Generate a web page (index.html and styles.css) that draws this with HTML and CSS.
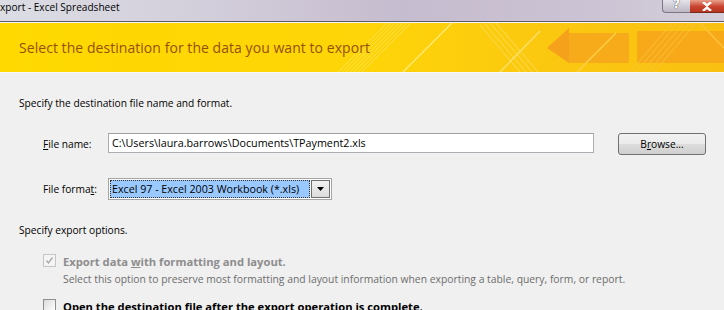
FILE: index.html
```html
<!DOCTYPE html>
<html>
<head>
<meta charset="utf-8">
<link rel="stylesheet" href="styles.css">
</head>
<body>
<div class="window">
  <div class="titlebar">
    <span class="title">xport - Excel Spreadsheet</span>
    <div class="caption-btns">
      <span class="cap help">?</span>
      <span class="cap close">
        <svg width="12" height="9" viewBox="0 0 12 9"><path d="M2 0 L6 3.5 L10 0 M2 9 L6 5.5 L10 9" stroke="#fff" stroke-width="2.4" fill="none"/></svg>
      </span>
    </div>
  </div>
  <div class="banner">
    <svg class="banner-art" width="724" height="49" viewBox="0 0 724 49">
      <defs>
        <linearGradient id="bg" x1="0" x2="1" y1="0" y2="0">
          <stop offset="0" stop-color="#ffd900"/>
          <stop offset="0.5" stop-color="#fed508"/>
          <stop offset="0.75" stop-color="#fbc810"/>
          <stop offset="1" stop-color="#f9c012"/>
        </linearGradient>
      </defs>
      <rect width="724" height="49" fill="url(#bg)"/>
      <g stroke="#ffe45a" stroke-width="1" opacity="0.8">
        <line x1="338" y1="49" x2="387" y2="0"/>
        <line x1="342" y1="49" x2="391" y2="0"/>
        <line x1="346" y1="49" x2="395" y2="0"/>
        <line x1="350" y1="49" x2="399" y2="0"/>
        <line x1="354" y1="49" x2="403" y2="0"/>
        <line x1="358" y1="49" x2="407" y2="0"/>
        <line x1="362" y1="49" x2="411" y2="0"/>
      </g>
      <line x1="403" y1="49" x2="452" y2="0" stroke="#ffe870" stroke-width="1.5"/>
      <g stroke="#fde06a" stroke-width="1" opacity="0.8">
        <line x1="480" y1="2" x2="520" y2="49"/>
        <line x1="484" y1="0" x2="526" y2="49"/>
        <line x1="490" y1="0" x2="532" y2="49"/>
        <line x1="496" y1="0" x2="538" y2="49"/>
      </g>
      <line x1="500" y1="49" x2="540" y2="8" stroke="#fde06a" stroke-width="1.5"/>
      <polygon points="547,25 569,5 569,40" fill="#f6a11c"/>
      <rect x="569" y="10" width="60" height="30" fill="#f7ab1a"/>
      <line x1="577" y1="49" x2="616" y2="10" stroke="#fbd046" stroke-width="1.5"/>
      <rect x="637" y="8" width="87" height="32" fill="#f7a91a"/>
      <g stroke="#fbc53a" stroke-width="1" opacity="0.9">
        <line x1="630" y1="49" x2="672" y2="0"/>
        <line x1="636" y1="49" x2="678" y2="0"/>
        <line x1="642" y1="49" x2="684" y2="0"/>
        <line x1="648" y1="49" x2="690" y2="0"/>
        <line x1="654" y1="49" x2="696" y2="0"/>
      </g>
      <line x1="700" y1="0" x2="724" y2="25" stroke="#fbc53a" stroke-width="1.5"/>
    </svg>
    <h1 class="banner-text">Select the destination for the data you want to export</h1>
  </div>
  <div class="content">
    <p class="section">Specify the destination file name and format.</p>
    <div class="row row-name">
      <label class="lbl"><u>F</u>ile name:</label>
      <div class="input">C:\Users\laura.barrows\Documents\TPayment2.xls</div>
      <div class="spacer"></div>
      <button class="btn">B<u>r</u>owse...</button>
    </div>
    <div class="row row-format">
      <label class="lbl">File forma<u>t</u>:</label>
      <div class="select">
        <span class="sel-value">Excel 97 - Excel 2003 Workbook (*.xls)</span>
        <span class="sel-arrow"><svg width="7" height="4" viewBox="0 0 7 4"><path d="M0 0 H7 L3.5 4 Z" fill="#000"/></svg></span>
      </div>
    </div>
    <p class="section section2">Specify export options.</p>
    <div class="opt">
      <span class="chk disabled"><svg width="11" height="11" viewBox="0 0 11 11"><path d="M2.5 5.5 L4.5 8 L8.5 2.5" stroke="#a9a9a9" stroke-width="1.3" fill="none"/></svg></span>
      <div class="opt-text">
        <div class="opt-title grey">Export data <u>w</u>ith formatting and layout.</div>
        <div class="opt-desc">Select this option to preserve most formatting and layout information when exporting a table, query, form, or report.</div>
      </div>
    </div>
    <div class="opt opt2">
      <span class="chk"></span>
      <div class="opt-text">
        <div class="opt-title">Open the destination file after the export operation is complete.</div>
      </div>
    </div>
  </div>
</div>
</body>
</html>
```

FILE: styles.css
```css
* { box-sizing: border-box; }
html, body { margin: 0; padding: 0; }
body {
  width: 724px;
  height: 310px;
  overflow: hidden;
  background: #f0f0f0;
  font-family: "Open Sans", "Noto Sans", sans-serif;
  font-size: 10.2px;
  color: #000;
}
.window { width: 724px; }
.titlebar {
  height: 22px;
  display: flex;
  align-items: flex-start;
  justify-content: space-between;
  background: linear-gradient(90deg, #dcdde4 0%, #d2cdda 30%, #c6bccf 55%, #cbc2d3 80%, #d4cfda 100%);
  border-bottom: 1px solid #5e5a66;
}
.title {
  font-size: 10.1px;
  line-height: 14px;
  padding-top: 0;
  color: #000;
}
.caption-btns { display: flex; }
.cap {
  height: 13px;
  display: flex;
  align-items: flex-end;
  justify-content: center;
  overflow: hidden;
}
.help {
  width: 28px;
  border: 1px solid #7c7786;
  border-top: none;
  border-right: none;
  border-radius: 0 0 0 4px;
  background: linear-gradient(#e6e3ea, #bdb7c4);
  color: #fff;
  font-weight: bold;
  font-family: "DejaVu Sans", sans-serif;
  font-size: 12px;
  text-shadow: 0 0 1px #555, 0 0 1px #555;
  line-height: 15px;
}
.close {
  width: 34px;
  align-items: center;
  background: linear-gradient(#e9a08c, #c8432f 55%, #b8351f);
  border-bottom: 1px solid #7a2a20;
}
.banner {
  height: 50px;
  position: relative;
  display: flex;
  align-items: center;
  border-top: 1px solid #f5f4f7;
}
.banner-art {
  position: absolute;
  left: 0;
  top: 0;
  display: block;
}
.banner-text {
  position: relative;
  margin: 0 0 1px 19px;
  font-weight: normal;
  font-size: 14px;
  color: #955000;
  letter-spacing: 0.05px;
}
.content {
  padding: 22px 0 0 19px;
  border-top: 1px solid #f7f7f7;
}
.section { margin: 0; line-height: 16px; }
.row {
  display: flex;
  align-items: center;
  padding-left: 24px;
}
.row-name { margin-top: 22px; padding-right: 18px; }
.lbl { width: 65px; flex: none; }
.input {
  width: 486px;
  height: 20px;
  background: #fff;
  border: 1px solid #abadb3;
  border-top-color: #a0a0a0;
  padding: 0 3px;
  line-height: 18px;
  margin-top: -2px;
  font-size: 10.75px;
}
.spacer { flex: 1; }
.btn {
  width: 88px;
  height: 22px;
  font: inherit;
  border: 1px solid #707070;
  border-radius: 3px;
  background: linear-gradient(#f2f2f2 0%, #ebebeb 49%, #dddddd 50%, #cfcfcf 100%);
  padding: 0;
  color: #000;
}
.row-format { margin-top: 23px; }
.select {
  width: 224px;
  height: 22px;
  border: 1px solid #a5a5a5;
  background: #fff;
  display: flex;
  align-items: stretch;
  padding: 1px;
}
.sel-value {
  flex: 1;
  background: #99c9ff;
  outline: 1px dotted #333;
  outline-offset: -1px;
  padding-left: 2px;
  line-height: 18px;
  font-size: 10.7px;
}
.sel-arrow {
  width: 19px;
  margin-left: 1px;
  border: 1px solid #707070;
  background: linear-gradient(#f2f2f2, #dcdcdc);
  display: flex;
  align-items: center;
  justify-content: center;
}
.section2 { margin-top: 22px; }
.opt {
  display: flex;
  align-items: flex-start;
  padding-left: 24px;
  margin-top: 16px;
}
.chk {
  width: 13px;
  height: 13px;
  flex: none;
  border: 1px solid #8e8f8f;
  background: linear-gradient(135deg, #dcdcdc, #fefefe);
  margin-top: 0;
  display: flex;
  align-items: center;
  justify-content: center;
}
.chk.disabled {
  border-color: #c5c5c5;
  background: #f4f4f4;
}
.opt-text { margin-left: 7px; }
.opt-title { font-weight: bold; font-size: 11.2px; line-height: 15px; }
.opt-title.grey { color: #8d8d8d; }
.opt-desc { color: #6d6d6d; line-height: 16px; margin-top: 2px; font-size: 10.35px; }
.opt2 { margin-top: 12px; }
```
